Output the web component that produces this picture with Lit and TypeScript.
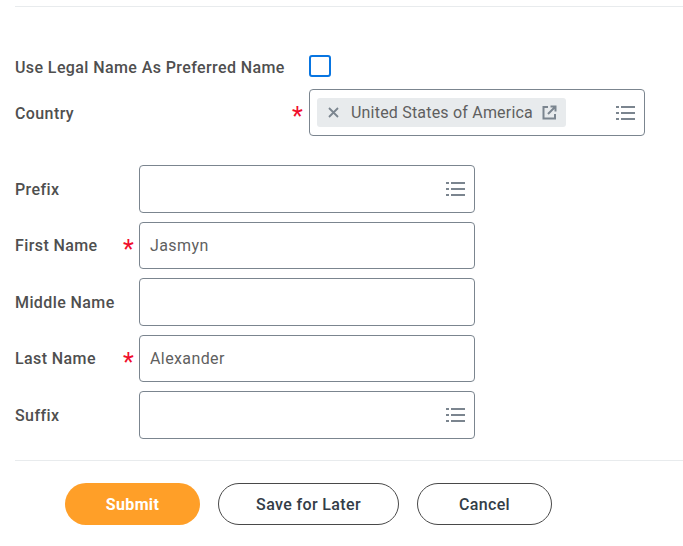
import { LitElement, html, css, svg } from "lit";
import { customElement } from "lit/decorators.js";

const listIcon = html`<svg class="list" width="19" height="16" viewBox="0 0 19 16">
  <g fill="#7b858f">
    <rect x="0" y="1" width="3" height="2"/><rect x="5" y="1" width="14" height="2"/>
    <rect x="0" y="7" width="3" height="2"/><rect x="5" y="7" width="14" height="2"/>
    <rect x="0" y="13" width="3" height="2"/><rect x="5" y="13" width="14" height="2"/>
  </g></svg>`;

const closeIcon = svg`<path d="M1 1 L10 10 M10 1 L1 10" stroke="#7b858f" stroke-width="1.8" fill="none"/>`;

@customElement("app-root")
export class AppRoot extends LitElement {
  static styles = css`
    :host { display: block; width: 683px; height: 546px; background: #fff; font-family: Roboto, "Liberation Sans", sans-serif; color: #494949; overflow: hidden; }
    .page { padding: 6px 0 0 15px; box-sizing: border-box; height: 546px; display: flex; flex-direction: column; }
    .rule { height: 1px; background: #e8ebed; flex: none; }
    .legal { display: flex; align-items: center; margin-top: 48px; height: 22px; }
    .label { font-size: 16px; font-weight: 500; color: #4f4f4f; line-height: 20px; letter-spacing: 0.4px; padding-top: 2px; }
    .legal .label { width: 294px; flex: none; padding-top: 3px; }
    .check { width: 22px; height: 22px; box-sizing: border-box; border: 2px solid #0875e1; border-radius: 3px; flex: none; }
    .country { display: flex; margin-top: 12px; align-items: center; }
    .country .label { width: 277px; flex: none; }
    .req { color: #f00e2c; font-size: 25px; line-height: 20px; font-weight: 400; width: 17px; flex: none; padding-top: 4px; height: 20px; box-sizing: border-box; }
    .box { box-sizing: border-box; border: 1px solid #7b858f; border-radius: 4px; background: #fff; display: flex; align-items: center; position: relative; }
    .country .box { width: 336px; height: 47px; padding: 0 9px 0 7px; justify-content: space-between; }
    .chip { display: flex; align-items: center; height: 29px; width: 249px; box-sizing: border-box; background: #e8ebed; border-radius: 3px; padding: 0 9px 0 11px; }
    .chip span { font-size: 16px; color: #5f5f5f; letter-spacing: 0.2px; margin-left: 12px; white-space: nowrap; flex: 1; }
    .chip svg { flex: none; }
    .names { display: grid; grid-template-columns: 124px 336px; row-gap: 9px; margin-top: 29px; align-items: center; }
    .names .box { height: 47.5px; padding: 0 9px 0 10px; justify-content: space-between; }
    .names .box .list { margin-left: auto; }
    .lab { display: flex; justify-content: space-between; align-items: center; }
    .lab .req { width: 16px; padding-top: 5px; }
    .val { font-size: 16px; color: #5f5f5f; letter-spacing: 0.4px; }
    .divider { height: 1px; background: #e8ebed; margin-top: 21.5px; flex: none; }
    .actions { display: flex; gap: 18px; margin: 22px 0 0 50px; }
    button { height: 42px; border-radius: 21px; font: 500 16px Roboto, "Liberation Sans", sans-serif; letter-spacing: 0.36px; box-sizing: border-box; background: #fff; border: 1px solid #494949; color: #333d47; padding: 0; }
    .submit { width: 135px; background: #ff9f28; border: none; color: #fff; font-weight: 700; }
    .save { width: 181px; }
    .cancel { width: 135px; }
  `;

  private row(name: string, required: boolean, value: string, list: boolean) {
    return html`
      <div class="lab"><span class="label">${name}</span>${required ? html`<span class="req">*</span>` : ""}</div>
      <div class="box">${value ? html`<span class="val">${value}</span>` : ""}${list ? listIcon : ""}</div>`;
  }

  render() {
    return html`<div class="page">
      <div class="rule"></div>
      <div class="legal"><span class="label">Use Legal Name As Preferred Name</span><div class="check"></div></div>
      <div class="country">
        <span class="label">Country</span><span class="req">*</span>
        <div class="box">
          <div class="chip">
            <svg width="11" height="11" viewBox="0 0 11 11">${closeIcon}</svg>
            <span>United States of America</span>
            <svg width="15" height="15" viewBox="0 0 15 15" fill="none" stroke="#7b858f" stroke-width="2">
              <path d="M6 2 H1.5 V13.5 H13 V9"/><path d="M6 9 L13 2 M8.5 1.5 H13.5 V6.5"/>
            </svg>
          </div>
          ${listIcon}
        </div>
      </div>
      <div class="names">
        ${this.row("Prefix", false, "", true)}
        ${this.row("First Name", true, "Jasmyn", false)}
        ${this.row("Middle Name", false, "", false)}
        ${this.row("Last Name", true, "Alexander", false)}
        ${this.row("Suffix", false, "", true)}
      </div>
      <div class="divider"></div>
      <div class="actions">
        <button class="submit">Submit</button>
        <button class="save">Save for Later</button>
        <button class="cancel">Cancel</button>
      </div>
    </div>`;
  }
}
